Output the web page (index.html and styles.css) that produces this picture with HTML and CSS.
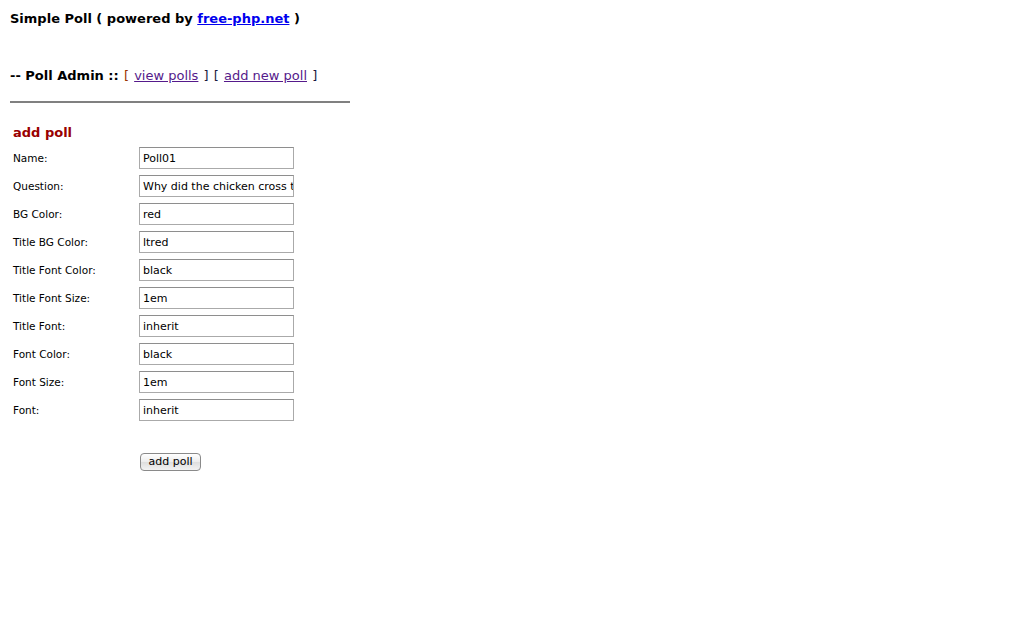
FILE: index.html
```html
<!DOCTYPE html>
<html>
<head>
<meta charset="utf-8">
<link rel="stylesheet" href="styles.css">
</head>
<body>
<div class="page">
  <h1 class="title">Simple Poll ( powered by <a class="ext" href="#">free-php.net</a> )</h1>
  <div class="admin"><b>-- Poll Admin ::</b> <span class="br1">[</span> <a class="vis" href="#">view polls</a> ] [ <a class="vis" href="#">add new poll</a> ]</div>
  <hr class="rule">
  <h2 class="heading">add poll</h2>
  <form class="form">
    <label class="lbl">Name:</label><input class="field" type="text" value="Poll01">
    <label class="lbl">Question:</label><input class="field" type="text" value="Why did the chicken cross the road?">
    <label class="lbl">BG Color:</label><input class="field" type="text" value="red">
    <label class="lbl">Title BG Color:</label><input class="field" type="text" value="ltred">
    <label class="lbl">Title Font Color:</label><input class="field" type="text" value="black">
    <label class="lbl">Title Font Size:</label><input class="field" type="text" value="1em">
    <label class="lbl">Title Font:</label><input class="field" type="text" value="inherit">
    <label class="lbl">Font Color:</label><input class="field" type="text" value="black">
    <label class="lbl">Font Size:</label><input class="field" type="text" value="1em">
    <label class="lbl">Font:</label><input class="field" type="text" value="inherit">
    <span class="spacer"></span><span class="spacer"></span>
    <span></span><div><button class="btn" type="button">add poll</button></div>
  </form>
</div>
</body>
</html>
```

FILE: styles.css
```css
html, body {
  margin: 0;
  padding: 0;
  background: #fff;
}
body {
  font-family: "DejaVu Sans", Verdana, sans-serif;
  color: #000;
}
.page {
  padding: 10px 0 0 10px;
}
.title {
  font-size: 13px;
  font-weight: bold;
  margin: 0;
  line-height: 18px;
}
.ext {
  color: #0000ee;
}
.admin {
  margin-top: 39px;
  font-size: 13px;
  line-height: 18px;
  color: #1a1a40;
  word-spacing: 1px;
}
.admin b {
  color: #000;
  word-spacing: 0;
}
.br1 {
  color: #993300;
}
.vis {
  color: #551a8b;
  word-spacing: 0;
}
.rule {
  width: 340px;
  margin: 16px 0 0 0;
  border: none;
  height: 2px;
  background: #808080;
}
.heading {
  margin: 21px 0 0 3px;
  font-size: 13px;
  font-weight: bold;
  color: #990000;
  line-height: 18px;
}
.form {
  margin: 5px 0 0 3px;
  display: grid;
  grid-template-columns: 126px 155px;
  row-gap: 6px;
  align-items: center;
}
.lbl {
  font-size: 10.5px;
  line-height: 22px;
}
.field {
  box-sizing: border-box;
  width: 155px;
  height: 22px;
  margin: 0;
  padding: 0 0 0 3px;
  border: 1px solid #aaa;
  border-top-color: #8e8e8e;
  font-family: "DejaVu Sans", Verdana, sans-serif;
  font-size: 11px;
  color: #000;
  background: #fff;
  outline: none;
}
.spacer {
  height: 17px;
}
.btn {
  margin-left: 1px;
  height: 18px;
  width: 61px;
  padding: 0;
  font-family: "DejaVu Sans", Verdana, sans-serif;
  font-size: 11px;
  color: #000;
  border: 1px solid #8a8a8a;
  border-radius: 4px;
  background: linear-gradient(#ffffff, #ececec 50%, #dedede 51%, #f2f2f2);
}
```
